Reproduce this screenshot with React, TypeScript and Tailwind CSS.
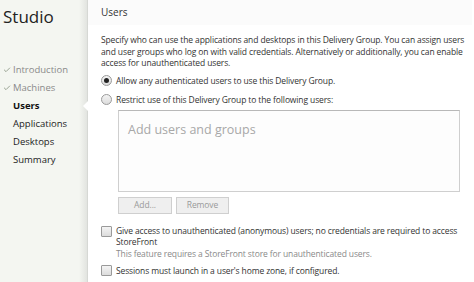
import { Check } from "lucide-react"

const navItems = [
  { label: "Introduction", done: true },
  { label: "Machines", done: true },
  { label: "Users", active: true },
  { label: "Applications" },
  { label: "Desktops" },
  { label: "Summary" },
]

const Radio = ({ checked }: { checked?: boolean }) => (
  <span className="w-[11px] h-[11px] rounded-full border border-[#9a9a9a] bg-gradient-to-b from-[#f4f4f4] to-[#dcdcdc] flex items-center justify-center shrink-0">
    {checked && <span className="w-[5px] h-[5px] rounded-full bg-[#222]" />}
  </span>
)

const Box = () => (
  <span className="block w-[11px] h-[11px] border border-[#9a9a9a] bg-gradient-to-b from-[#f4f4f4] to-[#dcdcdc] shrink-0 rounded-[1px]" />
)

export default function App() {
  return (
    <div className="flex w-[474px] h-[282px] overflow-hidden bg-white text-[#333] font-['Open_Sans',sans-serif]">
      <aside className="relative w-[88px] shrink-0 bg-[#f4f6f1] border-r border-[#d6d8d4]">
        <div className="absolute right-0 top-0 bottom-0 w-[8px] bg-gradient-to-r from-transparent to-[#e2e4e0]" />
        <h1 className="pl-[3px] pt-[5px] text-[17px] leading-[24px] text-[#222]">Studio</h1>
        <ul className="mt-[32px] flex flex-col">
          {navItems.map(item => (
            <li key={item.label} className="relative flex items-center h-[18px] text-[9.5px]">
              <span className="w-[13px] flex justify-center">
                {item.done && <Check size={8} strokeWidth={3} className="text-[#9aa494]" />}
              </span>
              <span className={item.active ? "font-bold text-[#111]" : item.done ? "text-[#8a8a8a]" : "text-[#222]"}>
                {item.label}
              </span>
              {item.active && (
                <span className="absolute right-[-1px] top-[4px] w-0 h-0 border-y-[5px] border-y-transparent border-r-[5px] border-r-white" />
              )}
            </li>
          ))}
        </ul>
      </aside>
      <main className="flex-1 pl-[13px] pr-[2px] text-[8.5px] leading-[11.5px] tracking-[-0.12px] text-[#333]">
        <h2 className="h-[25px] -ml-[13px] pl-[13px] pt-[7px] text-[10px] tracking-normal bg-[#fbfbfb]">Users</h2>
        <p className="mt-[9px] pr-[2px]">
          Specify who can use the applications and desktops in this Delivery Group. You can assign users and user groups who log on with valid credentials. Alternatively or additionally, you can enable access for unauthenticated users.
        </p>
        <div className="mt-[5px] flex items-center gap-[4px] h-[14px]">
          <Radio checked />
          <span>Allow any authenticated users to use this Delivery Group.</span>
        </div>
        <div className="mt-[5px] flex items-center gap-[4px] h-[14px]">
          <Radio />
          <span>Restrict use of this Delivery Group to the following users:</span>
        </div>
        <div className="ml-[17px] mr-[12px] mt-[3px] h-[82px] border border-[#cfcfcf] border-t-[#b8b8b8] px-[9px] pt-[11px] text-[12.5px] leading-[16px] tracking-normal text-[#a8a8a8] bg-[#fdfdfd]">
          Add users and groups
        </div>
        <div className="ml-[17px] mt-[5px] flex gap-[4px]">
          <button className="w-[54px] h-[17px] border border-[#cfcfcf] bg-[#efefef] text-[#9a9a9a] text-[8.5px]">Add...</button>
          <button className="w-[53px] h-[17px] border border-[#cfcfcf] bg-[#efefef] text-[#9a9a9a] text-[8.5px]">Remove</button>
        </div>
        <div className="mt-[11px] flex items-start gap-[4px]">
          <span className="mt-[1px] shrink-0"><Box /></span>
          <div className="pr-[8px]">
            <div>Give access to unauthenticated (anonymous) users; no credentials are required to access StoreFront</div>
            <div className="text-[#8a8a8a]">This feature requires a StoreFront store for unauthenticated users.</div>
          </div>
        </div>
        <div className="mt-[6px] flex items-center gap-[4px]">
          <Box />
          <span>Sessions must launch in a user's home zone, if configured.</span>
        </div>
      </main>
    </div>
  )
}
